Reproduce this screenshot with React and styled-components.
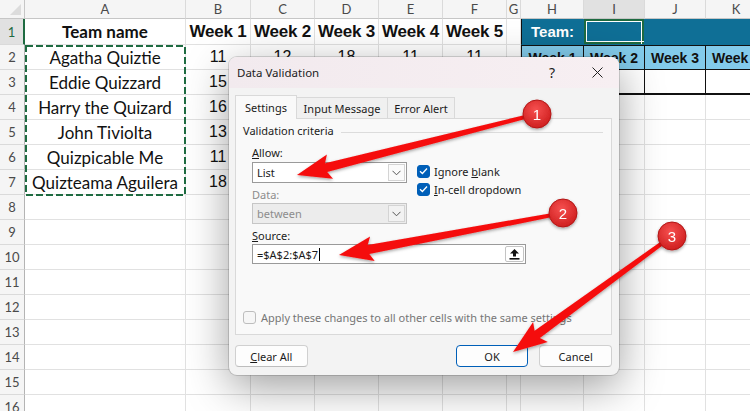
import React from 'react';
import styled, { createGlobalStyle, css } from 'styled-components';

const GlobalStyle = createGlobalStyle`
  *, *::before, *::after { box-sizing: border-box; }
  html, body { margin: 0; padding: 0; background: #fff; }
  body { font-family: 'Noto Sans', sans-serif; }
`;

const Screen = styled.div`
  position: relative;
  width: 750px;
  height: 411px;
  overflow: hidden;
  background: #fff;
`;

/* ---------- spreadsheet ---------- */

const Sheet = styled.div`
  display: grid;
  grid-template-columns: 25px 161px 65px 64px 64px 64px 64px 14px 63px 61px 61px 61px;
  grid-template-rows: 19px 26px repeat(15, 25px);
`;

const Corner = styled.div`
  position: relative;
  background: #f5f5f5;
  border-right: 1px solid #c6c6c6;
  border-bottom: 1px solid #c6c6c6;
  &::after {
    content: '';
    position: absolute;
    right: 3px;
    bottom: 3px;
    border-style: solid;
    border-width: 0 0 11px 11px;
    border-color: transparent transparent #dcdcdc transparent;
  }
`;

const ColHead = styled.div`
  display: flex;
  align-items: center;
  justify-content: center;
  font-family: 'Lato', sans-serif;
  font-size: 13px;
  color: #4a4a4a;
  background: ${p => (p.$active ? '#e1e1e1' : '#f5f5f5')};
  border-right: 1px solid #dadada;
  border-bottom: 1px solid #c6c6c6;
`;

const RowHead = styled.div`
  display: flex;
  align-items: center;
  justify-content: center;
  font-family: 'Lato', sans-serif;
  font-size: 13px;
  color: ${p => (p.$active ? '#1e6b41' : '#4a4a4a')};
  background: ${p => (p.$active ? '#e1e1e1' : '#f5f5f5')};
  border-bottom: 1px solid #dadada;
  border-right: ${p => (p.$active ? '2px solid #1e6b41' : '1px solid #b4b4b4')};
`;

const kinds = {
  plain: css``,
  head: css`
    justify-content: center;
    font-family: 'Lato', sans-serif;
    font-weight: 700;
    font-size: 17px;
  `,
  weekHead: css`
    justify-content: center;
    font-family: 'Liberation Sans', sans-serif;
    font-weight: 700;
    font-size: 17px;
    letter-spacing: -0.2px;
  `,
  name: css`
    justify-content: center;
    font-family: 'Lato', sans-serif;
    font-size: 17px;
  `,
  num: css`
    justify-content: center;
    font-family: 'Liberation Sans', sans-serif;
    font-size: 16px;
  `,
  team: css`
    padding-left: 9px;
    background: #0f6f96;
    color: #fff;
    font-family: 'Liberation Sans', sans-serif;
    font-weight: 700;
    font-size: 15px;
    border-right-color: #0f6f96;
    border-bottom-color: #0f6f96;
  `,
  teal: css`
    background: #0f6f96;
    border-right-color: #0f6f96;
    border-bottom-color: #0f6f96;
  `,
  selected: css`
    position: relative;
    background: #0f6f96;
    border-right-color: #0f6f96;
    border-bottom-color: #0f6f96;
    box-shadow: inset 0 0 0 2px #1e6b41, inset 0 0 0 3px #fff;
  `,
  weekBox: css`
    justify-content: center;
    background: #83cbeb;
    font-family: 'Liberation Sans', sans-serif;
    font-weight: 700;
    font-size: 14px;
    border-right-color: #111;
    border-bottom-color: #111;
    border-top: 1px solid #111;
  `,
  box: css`
    border-right-color: #111;
    border-bottom: 2px solid #111;
  `,
};

const Cell = styled.div`
  display: flex;
  align-items: center;
  overflow: hidden;
  white-space: nowrap;
  color: #111;
  border-right: 1px solid #e1e1e1;
  border-bottom: 1px solid #e1e1e1;
  ${p => kinds[p.$kind]}
  ${p => p.$leftEdge && css`border-left: 1px solid #111;`}
`;

const FillHandle = styled.span`
  position: absolute;
  right: -4px;
  bottom: -4px;
  width: 7px;
  height: 7px;
  background: #1e6b41;
  border: 1px solid #fff;
  z-index: 2;
`;

const Marquee = styled.svg`
  position: absolute;
  left: 25px;
  top: 45px;
  pointer-events: none;
`;

/* ---------- dialog ---------- */

const Dialog = styled.div`
  position: absolute;
  left: 229px;
  top: 57px;
  width: 390px;
  height: 318px;
  display: flex;
  flex-direction: column;
  border-radius: 8px;
  overflow: hidden;
  background: #f3f3f3;
  box-shadow: 0 12px 44px rgba(0, 0, 0, 0.38), 0 0 0 1px rgba(0, 0, 0, 0.14);
  font-family: 'Noto Sans', sans-serif;
  font-size: 11px;
  color: #1b1b1b;
`;

const TitleBar = styled.div`
  flex: none;
  height: 31px;
  display: flex;
  align-items: center;
  padding: 0 10px 0 8px;
  background: linear-gradient(90deg, #f2eaee, #f7eff2);
`;

const Title = styled.div`
  flex: 1;
  font-size: 11.5px;
`;

const TitleButton = styled.div`
  width: 24px;
  display: flex;
  justify-content: center;
  font-size: 14px;
  & + & { margin-left: 21px; }
`;

const Body = styled.div`
  flex: 1;
  display: flex;
  flex-direction: column;
  padding: 7px 7px 0 6px;
`;

const Tabs = styled.div`
  display: flex;
  align-items: flex-end;
  height: 23px;
`;

const Tab = styled.div`
  width: ${p => p.$w}px;
  height: ${p => (p.$active ? 24 : 21)}px;
  display: flex;
  align-items: center;
  justify-content: center;
  background: ${p => (p.$active ? '#f9f9f9' : '#f0f0f0')};
  border: 1px solid #d9d9d9;
  border-bottom: none;
  border-left-width: ${p => (p.$first ? 1 : 0)}px;
  position: relative;
  z-index: ${p => (p.$active ? 2 : 1)};
  margin-bottom: ${p => (p.$active ? -1 : 0)}px;
`;

const Panel = styled.div`
  height: 217px;
  display: flex;
  flex-direction: column;
  padding: 4px 8px 8px 7px;
  background: #f9f9f9;
  border: 1px solid #d9d9d9;
`;

const GroupHeader = styled.div`
  display: flex;
  align-items: center;
  line-height: 16px;
  &::after {
    content: '';
    flex: 1;
    height: 1px;
    margin-left: 7px;
    margin-top: 2px;
    background: #dcdcdc;
  }
`;

const Criteria = styled.div`
  margin-left: 9px;
  margin-top: 6px;
`;

const TwoCols = styled.div`
  display: flex;
  gap: 10px;
`;

const Column = styled.div`
  display: flex;
  flex-direction: column;
  width: ${p => (p.$w ? `${p.$w}px` : 'auto')};
  padding-top: ${p => p.$top || 0}px;
`;

const Label = styled.div`
  line-height: 16px;
  margin-top: ${p => p.$mt || 0}px;
  margin-bottom: ${p => p.$mb || 0}px;
  color: ${p => (p.$dim ? '#8c8c8c' : '#1b1b1b')};
`;

const Combo = styled.div`
  display: flex;
  align-items: stretch;
  height: 21px;
  width: 155px;
  border: 1px solid ${p => (p.$disabled ? '#c6c6c6' : '#9a9a9a')};
  background: ${p => (p.$disabled ? '#ececec' : '#fff')};
  color: ${p => (p.$disabled ? '#8c8c8c' : '#1b1b1b')};
`;

const ComboText = styled.div`
  flex: 1;
  display: flex;
  align-items: center;
  padding-left: 4px;
`;

const ComboButton = styled.div`
  width: 17px;
  margin: 1px;
  display: flex;
  align-items: center;
  justify-content: center;
  border: 1px solid #d4d4d4;
  background: ${p => (p.$disabled ? '#f2f2f2' : '#fbfbfb')};
`;

const CheckRow = styled.div`
  display: flex;
  align-items: center;
  gap: 4px;
  height: 18px;
  color: ${p => (p.$dim ? '#767676' : '#1b1b1b')};
`;

const Box = styled.div`
  width: 13px;
  height: 13px;
  border-radius: 3px;
  display: flex;
  align-items: center;
  justify-content: center;
  background: ${p => (p.$checked ? '#005fb8' : '#f6f6f6')};
  border: 1px solid ${p => (p.$checked ? '#005fb8' : '#bdbdbd')};
`;

const SourceInput = styled.div`
  display: flex;
  align-items: center;
  height: 20px;
  width: 274px;
  border: 1px solid #9a9a9a;
  background: #fff;
  padding-left: 4px;
`;

const Caret = styled.span`
  display: inline-block;
  width: 1px;
  height: 13px;
  margin-left: 1px;
  background: #000;
`;

const CollapseButton = styled.div`
  margin-left: auto;
  margin-right: 1px;
  width: 19px;
  height: 16px;
  display: flex;
  align-items: center;
  justify-content: center;
  border: 1px solid #c4c4c4;
  border-radius: 2px;
  background: #fff;
`;

const ApplyRow = styled(CheckRow)`
  margin-top: auto;
  gap: 5px;
`;

const Footer = styled.div`
  display: flex;
  align-items: center;
  margin-top: 10px;
`;

const Button = styled.div`
  width: 73px;
  height: 22px;
  display: flex;
  align-items: center;
  justify-content: center;
  border-radius: 4px;
  background: #fdfdfd;
  border: 1px solid ${p => (p.$primary ? '#005fb8' : '#d0d0d0')};
  border-bottom-color: ${p => (p.$primary ? '#005fb8' : '#bdbdbd')};
  margin-left: ${p => p.$ml || 0}px;
`;

/* ---------- annotations ---------- */

const Overlay = styled.svg`
  position: absolute;
  left: 0;
  top: 0;
  pointer-events: none;
`;

const BadgeText = styled.text`
  font-family: 'Liberation Sans', sans-serif;
  font-size: 15px;
  fill: #fff;
`;

/* ---------- data ---------- */

const COLS = ['A', 'B', 'C', 'D', 'E', 'F', 'G', 'H', 'I', 'J', 'K'];
const names = [
  'Agatha Quiztie',
  'Eddie Quizzard',
  'Harry the Quizard',
  'John Tiviolta',
  'Quizpicable Me',
  'Quizteama Aguilera',
];
const scores = [
  [11, 12, 18, 11, 11],
  [15, 14, 10, 16, 12],
  [16, 11, 13, 15, 17],
  [13, 17, 12, 14, 10],
  [11, 13, 16, 12, 15],
  [18, 15, 11, 13, 14],
];

function cellFor(r, c) {
  if (r === 1) {
    if (c === 0) return { kind: 'head', text: 'Team name' };
    if (c >= 1 && c <= 5) return { kind: 'weekHead', text: `Week ${c}` };
    if (c === 7) return { kind: 'team', text: 'Team:', left: true };
    if (c === 8) return { kind: 'selected' };
    if (c > 8) return { kind: 'teal' };
  }
  if (r >= 2 && r <= 7) {
    if (c === 0) return { kind: 'name', text: names[r - 2] };
    if (c >= 1 && c <= 5) return { kind: 'num', text: scores[r - 2][c - 1] };
  }
  if (r === 2 && c >= 7) return { kind: 'weekBox', text: `Week ${c - 6}`, left: c === 7 };
  if (r === 3 && c >= 7) return { kind: 'box', left: c === 7 };
  return { kind: 'plain' };
}

const arrows = [
  { n: 1, from: [537, 114], to: [297, 175] },
  { n: 2, from: [563, 213], to: [339, 255] },
  { n: 3, from: [672, 236], to: [513, 352] },
];

function arrowShape([x1, y1], [x2, y2]) {
  const dx = x2 - x1;
  const dy = y2 - y1;
  const len = Math.hypot(dx, dy);
  const ux = dx / len;
  const uy = dy / len;
  const nx = -uy;
  const ny = ux;
  const headLen = 30;
  const bx = x2 - ux * headLen;
  const by = y2 - uy * headLen;
  const wx = x2 - ux * (headLen + 4);
  const wy = y2 - uy * (headLen + 4);
  const p = (x, y, w) => `${(x + nx * w).toFixed(1)},${(y + ny * w).toFixed(1)}`;
  return [
    p(x1, y1, 1.8),
    p(bx, by, 4.5),
    p(wx, wy, 12.5),
    `${x2},${y2}`,
    p(wx, wy, -12.5),
    p(bx, by, -4.5),
    p(x1, y1, -1.8),
  ].join(' ');
}

const Chevron = () => (
  <svg width="9" height="6" viewBox="0 0 9 6">
    <polyline points="0.5,0.8 4.5,4.8 8.5,0.8" fill="none" stroke="#555" strokeWidth="1" />
  </svg>
);

const Tick = () => (
  <svg width="9" height="8" viewBox="0 0 9 8">
    <polyline points="1,4.2 3.4,6.5 8,1.5" fill="none" stroke="#fff" strokeWidth="1.3" />
  </svg>
);

const UploadIcon = () => (
  <svg width="11" height="12" viewBox="0 0 11 12">
    <path d="M5.5 1 L10 5.5 L7 5.5 L7 8.5 L4 8.5 L4 5.5 L1 5.5 Z" fill="#111" />
    <rect x="0.5" y="10" width="10" height="1.6" fill="#111" />
  </svg>
);

const CloseIcon = () => (
  <svg width="11" height="11" viewBox="0 0 11 11">
    <path d="M0.5 0.5 L10.5 10.5 M10.5 0.5 L0.5 10.5" stroke="#222" strokeWidth="1" />
  </svg>
);

export default function App() {
  const rows = Array.from({ length: 16 }, (_, i) => i + 1);
  return (
    <Screen>
      <GlobalStyle />
      <Sheet>
        <Corner />
        {COLS.map(col => (
          <ColHead key={col} $active={col === 'I'}>{col}</ColHead>
        ))}
        {rows.map(r => (
          <React.Fragment key={r}>
            <RowHead $active={r === 1}>{r}</RowHead>
            {COLS.map((col, c) => {
              const cell = cellFor(r, c);
              return (
                <Cell key={col} $kind={cell.kind} $leftEdge={cell.left}>
                  {cell.text}
                  {cell.kind === 'selected' && <FillHandle />}
                </Cell>
              );
            })}
          </React.Fragment>
        ))}
      </Sheet>

      <Marquee width="161" height="151">
        <rect x="1" y="1" width="159" height="149" fill="none" stroke="#1e6b41" strokeWidth="2" strokeDasharray="7 3" />
      </Marquee>

      <Dialog>
        <TitleBar>
          <Title>Data Validation</Title>
          <TitleButton>?</TitleButton>
          <TitleButton><CloseIcon /></TitleButton>
        </TitleBar>
        <Body>
          <Tabs>
            <Tab $w={62} $active $first>Settings</Tab>
            <Tab $w={91}>Input Message</Tab>
            <Tab $w={67}>Error Alert</Tab>
          </Tabs>
          <Panel>
            <GroupHeader>Validation criteria</GroupHeader>
            <Criteria>
              <TwoCols>
                <Column $w={155}>
                  <Label $mb={1}><u>A</u>llow:</Label>
                  <Combo>
                    <ComboText>List</ComboText>
                    <ComboButton><Chevron /></ComboButton>
                  </Combo>
                  <Label $mt={4} $dim>Data:</Label>
                  <Combo $disabled>
                    <ComboText>between</ComboText>
                    <ComboButton $disabled><Chevron /></ComboButton>
                  </Combo>
                </Column>
                <Column $top={17}>
                  <CheckRow>
                    <Box $checked><Tick /></Box>
                    <span>Ignore <u>b</u>lank</span>
                  </CheckRow>
                  <CheckRow>
                    <Box $checked><Tick /></Box>
                    <span><u>I</u>n-cell dropdown</span>
                  </CheckRow>
                </Column>
              </TwoCols>
              <Label $mt={4}><u>S</u>ource:</Label>
              <SourceInput>
                =$A$2:$A$7<Caret />
                <CollapseButton><UploadIcon /></CollapseButton>
              </SourceInput>
            </Criteria>
            <ApplyRow $dim>
              <Box />
              <span>Apply these changes to all other cells with the same settings</span>
            </ApplyRow>
          </Panel>
          <Footer>
            <Button><span><u>C</u>lear All</span></Button>
            <Button $primary $ml={148}>OK</Button>
            <Button $ml={11}>Cancel</Button>
          </Footer>
        </Body>
      </Dialog>

      <Overlay width="750" height="411">
        <defs>
          <radialGradient id="badge" cx="45%" cy="35%" r="65%">
            <stop offset="0" stopColor="#f65050" />
            <stop offset="1" stopColor="#cf1f1f" />
          </radialGradient>
          <filter id="shadow" x="-50%" y="-50%" width="200%" height="200%">
            <feDropShadow dx="0" dy="1.5" stdDeviation="1.5" floodColor="#000" floodOpacity="0.35" />
          </filter>
        </defs>
        {arrows.map(a => (
          <polygon key={`a${a.n}`} points={arrowShape(a.from, a.to)} fill="#f50d0d" filter="url(#shadow)" />
        ))}
        {arrows.map(a => (
          <g key={`b${a.n}`} filter="url(#shadow)">
            <circle cx={a.from[0]} cy={a.from[1]} r="14" fill="url(#badge)" stroke="#b31616" strokeWidth="1" />
            <BadgeText x={a.from[0]} y={a.from[1] + 5.5} textAnchor="middle">{a.n}</BadgeText>
          </g>
        ))}
      </Overlay>
    </Screen>
  );
}
